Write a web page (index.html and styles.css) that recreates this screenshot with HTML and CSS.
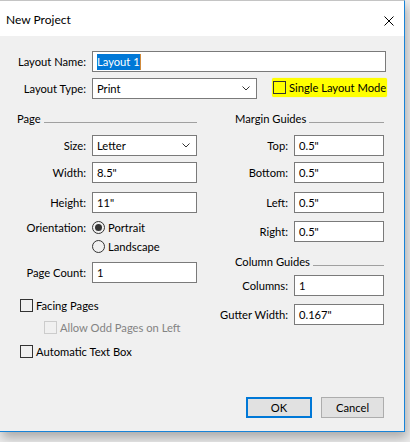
FILE: index.html
```html
<!DOCTYPE html>
<html lang="en">
<head>
<meta charset="utf-8">
<title>New Project</title>
<link rel="stylesheet" href="styles.css">
</head>
<body>
<div class="window">
  <div class="titlebar">
    <span class="title">New Project</span>
    <svg class="close" width="10" height="10" viewBox="0 0 10 10"><path d="M0.5 0.5 L9.5 9.5 M9.5 0.5 L0.5 9.5" stroke="#000" stroke-width="1" fill="none"/></svg>
  </div>
  <div class="content">
    <div class="row row-name">
      <span class="lbl lbl-top">Layout Name:</span>
      <div class="field field-name"><span class="selected">Layout 1</span><span class="caret"></span></div>
    </div>
    <div class="row row-type">
      <span class="lbl lbl-top">Layout Type:</span>
      <div class="field select field-type"><span class="value">Print</span><svg class="chev" width="8" height="5" viewBox="0 0 8 5"><path d="M0.5 0.5 L4 4 L7.5 0.5" stroke="#333" stroke-width="1" fill="none"/></svg></div>
      <div class="marker"><span class="check"></span><span>Single Layout Mode</span></div>
    </div>

    <div class="columns">
      <div class="col col-left">
        <div class="group-head"><span>Page</span><span class="rule"></span></div>
        <div class="row r-first">
          <span class="lbl">Size:</span>
          <div class="field select field-left"><span class="value">Letter</span><svg class="chev" width="8" height="5" viewBox="0 0 8 5"><path d="M0.5 0.5 L4 4 L7.5 0.5" stroke="#333" stroke-width="1" fill="none"/></svg></div>
        </div>
        <div class="row r-2">
          <span class="lbl">Width:</span>
          <div class="field field-left">8.5"</div>
        </div>
        <div class="row r-3">
          <span class="lbl">Height:</span>
          <div class="field field-left">11"</div>
        </div>
        <div class="radio-row r-portrait">
          <span class="lbl">Orientation:</span>
          <span class="radio on"></span><span>Portrait</span>
        </div>
        <div class="radio-row r-landscape">
          <span class="lbl"></span>
          <span class="radio"></span><span>Landscape</span>
        </div>
        <div class="row r-count">
          <span class="lbl">Page Count:</span>
          <div class="field field-left">1</div>
        </div>
        <div class="check-row c-facing"><span class="check"></span><span>Facing Pages</span></div>
        <div class="check-row c-odd disabled"><span class="check"></span><span>Allow Odd Pages on Left</span></div>
        <div class="check-row c-auto"><span class="check"></span><span>Automatic Text Box</span></div>
      </div>

      <div class="col col-right">
        <div class="group-head"><span>Margin Guides</span><span class="rule"></span></div>
        <div class="row r-first">
          <span class="lbl">Top:</span>
          <div class="field field-right">0.5"</div>
        </div>
        <div class="row r-2">
          <span class="lbl">Bottom:</span>
          <div class="field field-right">0.5"</div>
        </div>
        <div class="row r-3">
          <span class="lbl">Left:</span>
          <div class="field field-right">0.5"</div>
        </div>
        <div class="row r-4">
          <span class="lbl">Right:</span>
          <div class="field field-right">0.5"</div>
        </div>
        <div class="group-head head-columns"><span>Column Guides</span><span class="rule"></span></div>
        <div class="row r-cols">
          <span class="lbl">Columns:</span>
          <div class="field field-right">1</div>
        </div>
        <div class="row r-gutter">
          <span class="lbl">Gutter Width:</span>
          <div class="field field-right">0.167"</div>
        </div>
      </div>
    </div>

    <div class="buttons">
      <button class="btn btn-ok">OK</button>
      <button class="btn btn-cancel">Cancel</button>
    </div>
  </div>
</div>
</body>
</html>
```
FILE: styles.css
```css
html, body {
  margin: 0;
  padding: 0;
}

body {
  background: #ededed;
  font-family: "Segoe UI", Lato, "Liberation Sans", sans-serif;
  font-size: 11.2px;
  color: #000;
  width: 410px;
  height: 442px;
  overflow: hidden;
}

/* dialog frame */
.window {
  width: 405px;
  height: 432px;
  box-sizing: border-box;
  background: #f0f0f0;
  border-top: 1px solid #c4c4c4;
  border-right: 1px solid #1883d7;
  border-bottom: 1px solid #1883d7;
  display: flex;
  flex-direction: column;
  box-shadow: 2px 6px 10px rgba(0, 0, 0, 0.28);
}

.titlebar {
  height: 35px;
  box-sizing: border-box;
  background: #fff;
  display: flex;
  align-items: flex-start;
  padding: 11px 10px 0 6px;
  line-height: 16px;
  font-size: 12px;
}

.close {
  margin-left: auto;
  margin-top: 4px;
  display: block;
}

.content {
  flex: 1;
  display: flex;
  flex-direction: column;
  padding-top: 15px;
}

/* rows of label + field */
.row {
  display: flex;
  align-items: center;
  height: 21px;
}

.lbl {
  flex: none;
  text-align: right;
  margin-right: 6px;
  white-space: nowrap;
}

.lbl-top { width: 86px; }

.field {
  height: 21px;
  box-sizing: border-box;
  border: 1px solid #7a7a7a;
  background: #fff;
  padding: 0 4px;
  line-height: 19px;
  display: flex;
  align-items: center;
  white-space: nowrap;
}

.field-name { width: 294px; }

.selected {
  display: inline-block;
  line-height: 16px;
  background: #0078d7;
  color: #fff;
}

.caret {
  display: inline-block;
  width: 1px;
  height: 16px;
  background: #d08a3c;
}

.row-type { margin-top: 6px; }

.select { justify-content: space-between; padding-right: 6px; }
.field-type { width: 165px; }

.chev { display: block; }

/* highlighted checkbox */
.marker {
  margin-left: 15px;
  width: 115px;
  height: 19px;
  box-sizing: border-box;
  background: #ffff00;
  border-radius: 2px;
  box-shadow: 0 0 1px 0 #f4f400;
  display: flex;
  align-items: center;
  padding-left: 1px;
  margin-top: -3px;
  white-space: nowrap;
}

.check {
  flex: none;
  width: 13px;
  height: 13px;
  box-sizing: border-box;
  border: 1px solid #333;
  margin-right: 3px;
}

/* two group columns */
.columns {
  display: flex;
  margin-top: 12px;
}

.col {
  display: flex;
  flex-direction: column;
}

.col-left { width: 200px; }
.col-right { width: 204px; }

.col-left .lbl { width: 86px; }
.col-right .lbl { width: 88px; }

.field-left { width: 105px; }
.field-right { width: 90px; }

.group-head {
  display: flex;
  line-height: 16px;
  height: 16px;
}

.col-left .group-head { padding: 0 3px 0 17px; }
.col-right .group-head { padding: 0 20px 0 35px; }

.rule {
  flex: 1;
  height: 1px;
  margin: 11px 0 0 3px;
  background: #a0a0a0;
}

.r-first { margin-top: 8px; }
.r-2 { margin-top: 6px; }
.r-3 { margin-top: 9px; }
.r-4 { margin-top: 8px; }

.radio-row {
  display: flex;
  align-items: center;
  height: 15px;
}

.r-portrait { margin-top: 7px; }
.r-landscape { margin-top: 4px; }

.radio {
  flex: none;
  width: 13px;
  height: 13px;
  box-sizing: border-box;
  border: 1px solid #333;
  border-radius: 50%;
  margin-right: 3px;
  display: flex;
  align-items: center;
  justify-content: center;
}

.radio.on::after {
  content: "";
  width: 7px;
  height: 7px;
  border-radius: 50%;
  background: #333;
}

.r-count { margin-top: 8px; }

.check-row {
  display: flex;
  align-items: center;
  height: 15px;
  padding-left: 20px;
}

.c-facing { margin-top: 15px; }
.c-odd { margin-top: 7px; padding-left: 44px; }
.c-auto { margin-top: 9px; }

.disabled { color: #838383; }
.disabled .check { border-color: #cccccc; }

.head-columns { margin-top: 12px; }
.r-cols { margin-top: 5px; }
.r-gutter { margin-top: 8px; }

/* dialog buttons */
.buttons {
  margin-top: auto;
  display: flex;
  justify-content: flex-end;
  gap: 9px;
  padding: 0 20px 13px 0;
}

.btn {
  height: 21px;
  box-sizing: border-box;
  background: #e1e1e1;
  font: inherit;
  color: #000;
  padding: 0;
  margin: 0;
}

.btn-ok {
  width: 66px;
  border: 2px solid #0078d7;
}

.btn-cancel {
  width: 63px;
  border: 1px solid #adadad;
}
```
